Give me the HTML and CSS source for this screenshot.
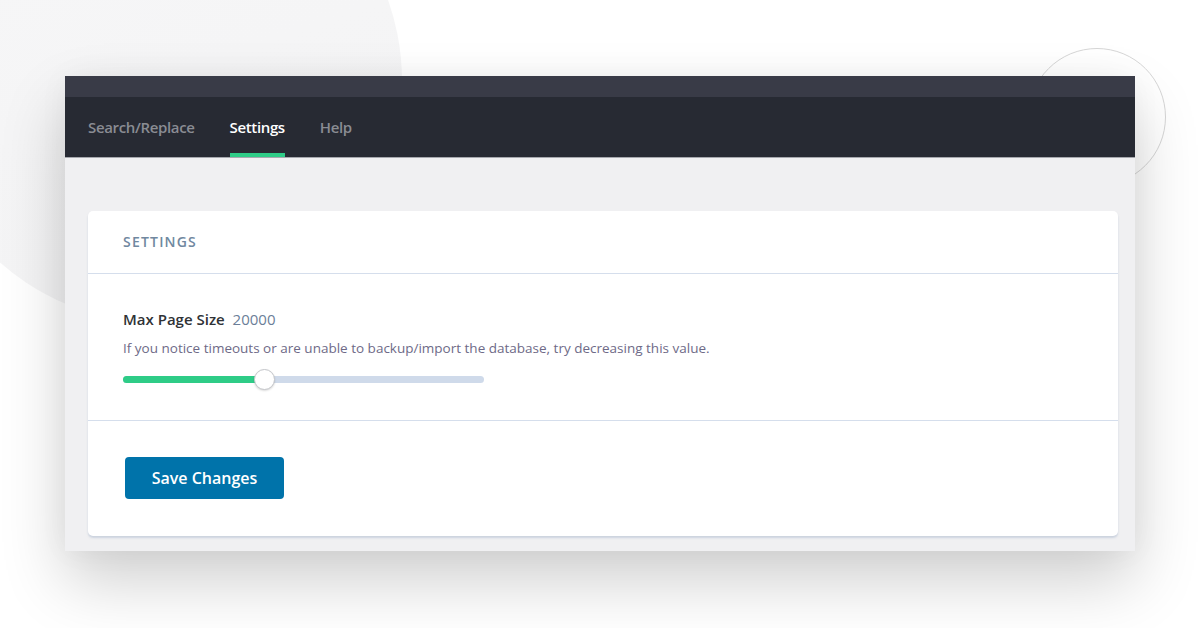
FILE: index.html
```html
<!DOCTYPE html>
<html lang="en">
<head>
<meta charset="utf-8">
<title>Settings</title>
<link rel="stylesheet" href="styles.css">
</head>
<body>
<div class="stage">
  <div class="blob"></div>
  <div class="ring"></div>
  <div class="window">
    <div class="topstrip"></div>
    <nav class="tabs">
      <a class="tab">Search/Replace</a>
      <a class="tab active">Settings</a>
      <a class="tab">Help</a>
    </nav>
    <div class="content">
      <section class="card">
        <header class="card-head">SETTINGS</header>
        <div class="card-body">
          <div class="field-label">Max Page Size <span class="field-value">20000</span></div>
          <p class="field-desc">If you notice timeouts or are unable to backup/import the database, try decreasing this value.</p>
          <div class="slider">
            <div class="slider-fill" style="width: 141px"></div>
            <div class="slider-thumb"></div>
          </div>
        </div>
        <footer class="card-foot">
          <button class="btn">Save Changes</button>
        </footer>
      </section>
    </div>
  </div>
</div>
</body>
</html>
```
FILE: styles.css
```css
* { box-sizing: border-box; }
html, body { margin: 0; padding: 0; }
body {
  background: #ffffff;
  font-family: "Open Sans", "Noto Sans", sans-serif;
  width: 1200px;
  height: 628px;
  overflow: hidden;
}
.stage {
  position: relative;
  width: 1200px;
  height: 628px;
  padding-top: 76px;
  padding-left: 65px;
}
.blob {
  position: absolute;
  left: -82px;
  top: -161px;
  width: 484px;
  height: 484px;
  border-radius: 50%;
  background: linear-gradient(160deg, #f7f7f8 0%, #f3f3f4 100%);
}
.ring {
  position: absolute;
  left: 1028px;
  top: 48px;
  width: 138px;
  height: 138px;
  border-radius: 50%;
  border: 1px solid #d6d6d6;
}
.window {
  position: relative;
  width: 1070px;
  height: 475px;
  background: #f0f0f2;
  box-shadow: 0 30px 60px rgba(0, 0, 0, 0.19), 0 0 30px rgba(0, 0, 0, 0.04);
  display: flex;
  flex-direction: column;
}
.topstrip {
  height: 21px;
  background: #393b47;
}
.tabs {
  height: 61px;
  background: #272a33;
  border-bottom: 1px solid #a6a8ae;
  display: flex;
  gap: 35px;
  padding-left: 23px;
}
.tab {
  position: relative;
  font-size: 15px;
  font-weight: 600;
  color: #8a8c93;
  line-height: 60px;
  letter-spacing: -0.35px;
}
.tab.active {
  color: #ffffff;
}
.tab.active::after {
  content: "";
  position: absolute;
  left: 0;
  right: 0;
  bottom: 0;
  height: 4px;
  background: #2ecc87;
}
.content {
  flex: 1;
  padding: 53px 17px 14px 23px;
}
.card {
  background: #ffffff;
  border-radius: 5px;
  box-shadow: 0 2px 2px rgba(180, 192, 210, 0.6);
}
.card-head {
  height: 63px;
  padding-left: 35px;
  line-height: 62px;
  font-size: 14px;
  font-weight: 600;
  letter-spacing: 1.2px;
  color: #7088a0;
  border-bottom: 1px solid #d5deec;
}
.card-body {
  padding: 35px 35px 37px 35px;
  border-bottom: 1px solid #d5deec;
}
.field-label {
  font-size: 15px;
  font-weight: 600;
  color: #2f3236;
  line-height: 20px;
}
.field-value {
  font-weight: 400;
  color: #6b7e98;
  margin-left: 4px;
}
.field-desc {
  margin: 9px 0 0 0;
  font-size: 13.5px;
  line-height: 20px;
  color: #6e6a87;
}
.slider {
  position: relative;
  margin-top: 18px;
  width: 361px;
  height: 7px;
  border-radius: 4px;
  background: #cfdaea;
}
.slider-fill {
  height: 7px;
  border-radius: 4px;
  background: #2ecc87;
}
.slider-thumb {
  position: absolute;
  left: 131px;
  top: -7px;
  width: 21px;
  height: 21px;
  border-radius: 50%;
  background: #ffffff;
  border: 1px solid #c4c6ca;
  box-shadow: 0 1px 2px rgba(0, 0, 0, 0.15);
}
.card-foot {
  padding: 36px 37px 37px 37px;
}
.btn {
  width: 159px;
  height: 42px;
  border: 0;
  border-radius: 4px;
  background: #0073aa;
  color: #ffffff;
  font-family: "Open Sans", "Noto Sans", sans-serif;
  font-size: 16px;
  font-weight: 600;
  padding: 0;
}
```
